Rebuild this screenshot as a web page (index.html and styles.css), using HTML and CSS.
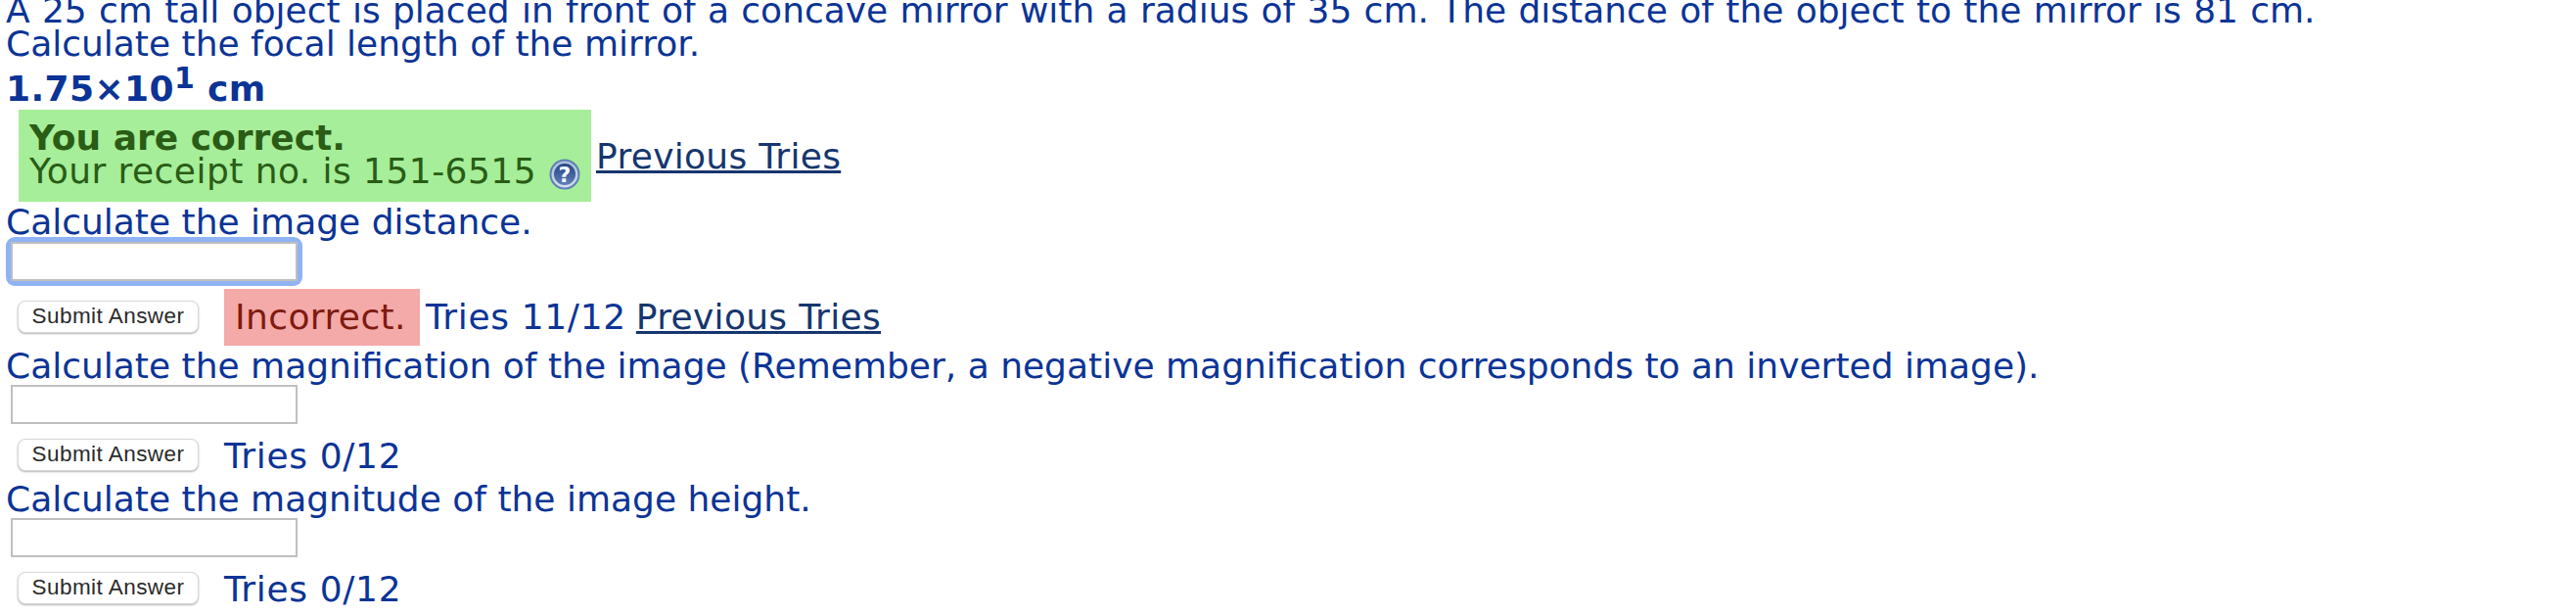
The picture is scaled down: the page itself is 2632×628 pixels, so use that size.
FILE: index.html
```html
<!DOCTYPE html>
<html lang="en">
<head>
<meta charset="utf-8">
<title>Concave mirror problem</title>
<link rel="stylesheet" href="styles.css">
</head>
<body>
<main class="problem">
  <div class="text lead">A 25 cm tall object is placed in front of a concave mirror with a radius of 35 cm. The distance of the object to the mirror is 81 cm.</div>
  <div class="text">Calculate the focal length of the mirror.</div>
  <div class="answer">1.75×10<sup class="exp">1</sup> cm</div>
  <div class="result-row">
    <div class="correct">
      <strong class="correct-title">You are correct.</strong>
      <span class="receipt">Your receipt no. is 151-6515
        <svg class="help" viewBox="0 0 32 32" aria-hidden="true">
          <defs>
            <linearGradient id="ring" x1="0" y1="0" x2="0" y2="1">
              <stop offset="0" stop-color="#a9bcdc"/>
              <stop offset="1" stop-color="#d4deef"/>
            </linearGradient>
            <linearGradient id="core" x1="0" y1="0" x2="0" y2="1">
              <stop offset="0" stop-color="#264686"/>
              <stop offset="1" stop-color="#5f80b8"/>
            </linearGradient>
          </defs>
          <circle cx="16" cy="16" r="15.5" fill="#5f7fb4"/>
          <circle cx="16" cy="16" r="13.5" fill="url(#ring)"/>
          <circle cx="16" cy="16" r="11" fill="url(#core)"/>
          <text x="16" y="24" class="help-mark">?</text>
        </svg>
      </span>
    </div>
    <a class="link link-side" href="#">Previous Tries</a>
  </div>
  <div class="text step">Calculate the image distance.</div>
  <div class="focus-ring">
    <input class="field field-focus" type="text" aria-label="Image distance">
  </div>
  <div class="submit-row first">
    <button class="submit" type="button">Submit Answer</button>
    <span class="incorrect">Incorrect.</span>
    <span class="tries">Tries 11/12 <a class="link link-inline" href="#">Previous Tries</a></span>
  </div>
  <div class="text">Calculate the magnification of the image (Remember, a negative magnification corresponds to an inverted image).</div>
  <input class="field field-mag" type="text" aria-label="Magnification">
  <div class="submit-row">
    <button class="submit" type="button">Submit Answer</button>
    <span class="tries">Tries 0/12</span>
  </div>
  <div class="text">Calculate the magnitude of the image height.</div>
  <input class="field field-low" type="text" aria-label="Image height">
  <div class="submit-row">
    <button class="submit" type="button">Submit Answer</button>
    <span class="tries">Tries 0/12</span>
  </div>
</main>
</body>
</html>
```
FILE: styles.css
```css
html, body {
  margin: 0;
  padding: 0;
  background: #fff;
  height: 628px;
  overflow: hidden;
}
.problem {
  margin: -6px 0 0 6px;
  font-family: "DejaVu Sans", Verdana, sans-serif;
  font-size: 36px;
  line-height: 34px;
  color: #0b3496;
}
.text {
  white-space: nowrap;
}
.lead {
  word-spacing: 0.85px;
}
.answer {
  height: 50px;
  padding-top: 12px;
  box-sizing: border-box;
  font-weight: bold;
  letter-spacing: 0.4px;
  white-space: nowrap;
}
.exp {
  font-size: 30px;
  line-height: 0;
  vertical-align: 13px;
}
.result-row {
  display: flex;
  align-items: center;
  height: 94px;
  margin-left: 13px;
}
.correct {
  display: flex;
  flex-direction: column;
  box-sizing: border-box;
  height: 94px;
  padding: 12px 0 0 11px;
  width: 585px;
  margin-right: 5px;
  background: #a6ee99;
  color: #2a5c16;
}
.correct-title {
  font-weight: bold;
}
.receipt {
  letter-spacing: 0.45px;
  white-space: nowrap;
}
.help {
  display: inline-block;
  width: 32px;
  height: 32px;
  margin-left: 1px;
  vertical-align: -7px;
}
.help-mark {
  font-family: "DejaVu Sans", sans-serif;
  font-size: 22px;
  font-weight: bold;
  fill: #f4f7fc;
  text-anchor: middle;
}
.link {
  color: #16366e;
  text-decoration: underline;
}
.link-side {
  padding-top: 2px;
  letter-spacing: 0.3px;
}
.link-inline {
  margin-left: -2px;
  letter-spacing: 0.3px;
}
.step {
  margin-top: 4px;
}
.field {
  display: block;
  box-sizing: border-box;
  width: 293px;
  height: 40px;
  margin: 1px 0 0 5px;
  padding: 0;
  border: 2px solid #bfbfbf;
  background: #fff;
  outline: none;
}
.field-mag {
  margin-top: 2px;
}
.field-low {
  margin-top: 2px;
}
.focus-ring {
  width: 303px;
  box-sizing: border-box;
  margin-top: -2px;
  padding: 5px;
  border-radius: 9px;
  background: #8fb3f3;
}
.field-focus {
  margin: 0;
}
.submit-row {
  display: flex;
  align-items: center;
  box-sizing: border-box;
  height: 60px;
  padding-top: 2px;
  margin-left: 12px;
  white-space: nowrap;
}
.submit-row.first {
  height: 58px;
  padding-top: 0;
  margin-top: 3px;
  margin-bottom: 4px;
}
.first .submit {
  margin-bottom: 2px;
}
.submit {
  box-sizing: border-box;
  width: 185px;
  height: 33px;
  padding: 0;
  margin-right: 26px;
  border: 1px solid #d8d8d8;
  border-radius: 8px;
  background: #fff;
  box-shadow: 0 1px 2px #b4b4b4;
  font-family: "Liberation Sans", Arial, sans-serif;
  font-size: 22.5px;
  letter-spacing: 0.45px;
  color: #2a2a2a;
}
.tries {
  padding-top: 3px;
  letter-spacing: 0.65px;
}
.first .tries {
  padding-top: 0;
}
.incorrect {
  display: block;
  box-sizing: border-box;
  width: 200px;
  height: 58px;
  padding: 12px 0 0 11px;
  margin-right: 6px;
  letter-spacing: 0.4px;
  background: #f4aaa8;
  color: #7f1a0f;
}
```
